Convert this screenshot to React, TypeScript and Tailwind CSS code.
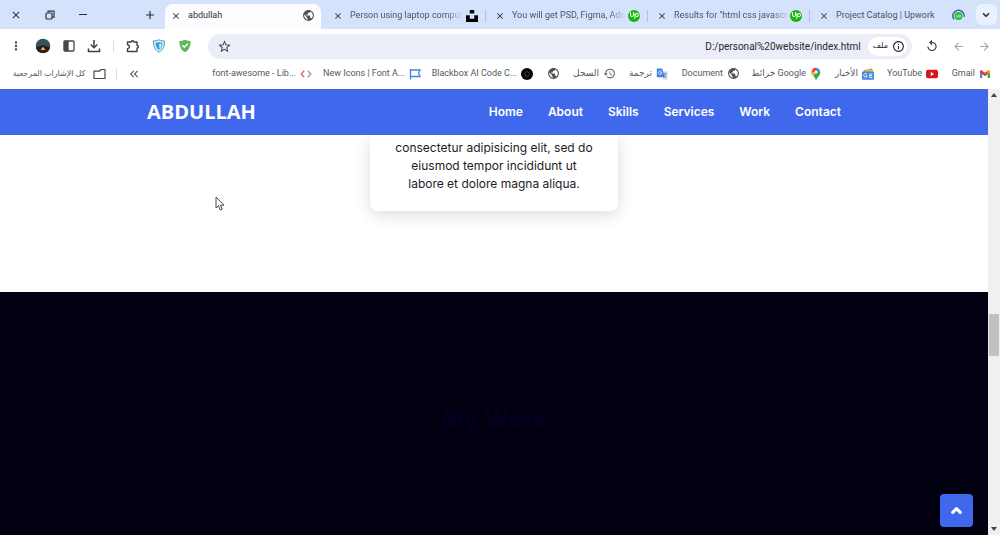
import type { ReactNode } from "react";
import {
  MdArrowBack,
  MdArrowForward,
  MdClose,
  MdHistory,
  MdInfoOutline,
  MdKeyboardDoubleArrowLeft,
  MdMoreVert,
  MdPublic,
  MdReplay,
  MdStarOutline,
} from "react-icons/md";
import { SiUnsplash, SiUpwork } from "react-icons/si";
import { ChevronDown, ChevronUp } from "lucide-react";

type Tab = { title: string; icon: ReactNode; active?: boolean; faded?: boolean };
type Bookmark = { label: string; width: string; icon: ReactNode; name?: string };

function GlobeIcon() {
  return <MdPublic className="h-[13px] w-[13px] text-[#4f5358]" />;
}

function UpworkBadge() {
  return (
    <span className="flex h-3 w-3 items-center justify-center rounded-full bg-[#14b80a] text-white">
      <SiUpwork className="h-[9px] w-[9px]" />
    </span>
  );
}

function UpworkLoading() {
  return (
    <svg viewBox="0 0 14 14" className="h-[13px] w-[13px]">
      <circle cx="7" cy="7.500" r="4.400" fill="#35c03c" />
      <path d="M4.800 6.500v1a1 1 0 0 0 2 0v-1c.5 1.500 1.300 2 1.900 1.900a1 1 0 1 0-1-1.500L7.300 9.500" fill="none" stroke="#b9ecb7" strokeWidth=".7" />
      <path d="M2.200 11.200A6.100 6.100 0 1 1 13 8.500" fill="none" stroke="#2c5fa8" strokeWidth="1.500" />
    </svg>
  );
}

function AvatarIcon() {
  return (
    <svg viewBox="0 0 16 16" className="h-4 w-4">
      <circle cx="8" cy="8" r="7.300" fill="#37505e" />
      <path d="M1 9.500 5 8l3-1 3 1 4 1.500a7.300 7.300 0 0 1-14 0Z" fill="#20201f" />
      <path d="M8 8.500 5.300 12h5.400Z" fill="#e8761e" />
      <circle cx="8" cy="11" r="1.200" fill="#ffb53a" />
    </svg>
  );
}

function SidePanelIcon() {
  return (
    <svg viewBox="0 0 12 12" className="h-3 w-3" fill="none" stroke="#474747" strokeWidth="1.300">
      <rect x="1" y="1" width="10" height="10" rx="1" />
      <path d="M1.500 1.500H5v9H1.500Z" fill="#474747" />
    </svg>
  );
}

function DownloadIcon() {
  return (
    <svg viewBox="0 0 14 14" className="h-[14px] w-[14px]" fill="none" stroke="#3f3f3f" strokeWidth="1.500">
      <path d="M7 1v7.500M3.700 5.500 7 8.800l3.300-3.300M1.500 9.500v3h11v-3" />
    </svg>
  );
}

function PuzzleIcon() {
  return (
    <svg viewBox="0 0 14 14" className="h-[14px] w-[14px]" fill="none" stroke="#3f3f3f" strokeWidth="1.400" strokeLinejoin="round">
      <path d="M1.500 3H5.200a1.300 1.300 0 0 1 2.600 0H11v3.300a1.300 1.300 0 0 1 0 2.700v3.500H1.500V9.600a1.900 1.900 0 0 0 0-3.800Z" />
    </svg>
  );
}

function BlueShieldIcon() {
  return (
    <svg viewBox="0 0 14 14" className="h-[14px] w-[14px]">
      <path d="M7 .8c2 .9 3.800 1.200 5.600 1.200 0 5-1.200 8.800-5.600 11.200C2.600 10.800 1.400 7 1.400 2 3.200 2 5 1.700 7 .8Z" fill="#dff1fb" stroke="#2f9fd0" strokeWidth="1" />
      <path d="M7 3c1.200.5 2.300.7 3.500.8-.1 3-1 5.600-3.500 7.300-2.500-1.700-3.400-4.300-3.500-7.300C4.700 3.700 5.800 3.500 7 3Z" fill="#3a9bcd" />
      <path d="M7.300 4.300v5.400C9 8.500 9.500 6.800 9.500 4.900Z" fill="#e8f5fc" />
    </svg>
  );
}

function GreenShieldIcon() {
  return (
    <svg viewBox="0 0 14 14" className="h-[14px] w-[14px]">
      <path d="M7 .8c2 .9 3.800 1.200 5.600 1.200 0 5-1.200 8.800-5.600 11.200C2.600 10.800 1.400 7 1.400 2 3.200 2 5 1.700 7 .8Z" fill="#5cb85a" />
      <path d="m4.300 6.300 2 2 3.500-3.500" fill="none" stroke="#fff" strokeWidth="1.400" />
    </svg>
  );
}

function FolderIcon() {
  return (
    <svg viewBox="0 0 13 12" className="h-3 w-[13px]" fill="none" stroke="#4a4a4a" strokeWidth="1.200">
      <path d="M1 3.200V10.500h11V1.500H8L6.600 3.200Z" strokeLinejoin="round" />
    </svg>
  );
}

function CodeIcon() {
  return (
    <svg viewBox="0 0 12 12" className="h-3 w-3" fill="none" strokeWidth="1.300">
      <path d="M4.300 2.800 1.200 6l3.100 3.200" stroke="#d9695f" />
      <path d="M7.700 2.800 10.800 6 7.700 9.200" stroke="#b98f86" />
    </svg>
  );
}

function FlagIcon() {
  return (
    <svg viewBox="0 0 12 12" className="h-3 w-3" fill="none" stroke="#4285d6" strokeWidth="1.300">
      <path d="M1.500 1v10.500M1.500 2h9.500L9.600 5.200 11 8.500H1.500" />
    </svg>
  );
}

function BlackboxIcon() {
  return (
    <svg viewBox="0 0 12 12" className="h-3 w-3">
      <circle cx="6" cy="6" r="6" fill="#050505" />
      <path d="m6 3.500 2.200 1.200v2.500L6 8.500 3.800 7.200V4.700Z" fill="none" stroke="#555" strokeWidth=".7" />
    </svg>
  );
}

function TranslateIcon() {
  return (
    <svg viewBox="0 0 12 12" className="h-3 w-3">
      <path d="M5 3.500h6.300v8H7.500Z" fill="#c8d3e4" />
      <path d="M7.500 5.800h3.300M9.200 5v.8c0 1.500-1 2.600-2 3.200M8 7c.5 1 1.300 1.600 2.400 2.200" fill="none" stroke="#6a7f9f" strokeWidth=".7" />
      <path d="M.8.5h5.400l2.500 8.800H.8Z" fill="#4080e8" />
      <path d="M5.800 4.700H4.300M5.400 3.500a1.700 1.700 0 1 0 .4 1.300" fill="none" stroke="#fff" strokeWidth=".8" />
    </svg>
  );
}

function MapsIcon() {
  return (
    <svg viewBox="0 0 12 14" className="h-[14px] w-3">
      <path d="M6 13.500c.5-2.500 4.300-4.700 4.300-8.300L8.800 2 3.300 8.700C4.700 10.500 5.700 12 6 13.500Z" fill="#34a853" />
      <path d="M6 .8a4.300 4.300 0 0 1 4 2.800L6 5.200Z" fill="#4285f4" />
      <path d="M6 .8v4.400L2.500 8A4.400 4.400 0 0 1 6 .8Z" fill="#ea4335" />
      <path d="M6 5.200 2.900 8.900C2 7.600 1.700 6.300 1.700 5.200Z" fill="#fbbc04" />
      <circle cx="6" cy="5" r="1.600" fill="#fff" />
    </svg>
  );
}

function NewsIcon() {
  return (
    <svg viewBox="0 0 12 12" className="h-3 w-3">
      <path d="M1.500 2.500 10 .5l1 4H2Z" fill="#5aa469" />
      <path d="M3 1.500h8v4H3Z" fill="#e9b44c" />
      <rect x="0" y="3.500" width="12" height="8.300" rx="1" fill="#4a88e0" />
      <path d="M5 6.200a1.800 1.800 0 1 0 .3 1.700H3.800M7 6.100h3.500M7 7.700h3M7 9.300h3.500" fill="none" stroke="#fff" strokeWidth=".9" />
    </svg>
  );
}

function YouTubeIcon() {
  return (
    <svg viewBox="0 0 12 12" className="h-3 w-3">
      <rect x="0" y="1.700" width="12" height="8.600" rx="2" fill="#d9141c" />
      <path d="M4.800 4.100v3.800L8 6Z" fill="#fff" />
    </svg>
  );
}

function GmailIcon() {
  return (
    <svg viewBox="0 0 12 12" className="h-3 w-3">
      <path d="M1 3.500h2.300V10H1Z" fill="#4285f4" />
      <path d="M8.700 3.500H11V10H8.700Z" fill="#34a853" />
      <path d="M1 4.500v-2L2.300 2 6 4.800 9.700 2l1.300.5v2L6 8.200Z" fill="#dd4335" />
      <path d="M8.700 2.800 9.700 2l1.300.5v2L8.700 6.200Z" fill="#fbbc04" />
    </svg>
  );
}

const tabs: Tab[] = [
  { title: "abdullah", icon: <GlobeIcon />, active: true },
  { title: "Person using laptop comput", icon: <SiUnsplash className="h-3 w-3 text-black" />, faded: true },
  { title: "You will get PSD, Figma, Ado", icon: <UpworkBadge />, faded: true },
  { title: 'Results for "html css javascri', icon: <UpworkBadge />, faded: true },
  { title: "Project Catalog | Upwork", icon: <UpworkLoading /> },
];

const bookmarks: Bookmark[] = [
  { label: "font-awesome - Lib...", width: "w-[82px]", icon: <CodeIcon /> },
  { label: "New Icons | Font A...", width: "w-[79px]", icon: <FlagIcon /> },
  { label: "Blackbox AI Code C...", width: "w-[82px]", icon: <BlackboxIcon /> },
  { label: "", name: "Website", width: "", icon: <GlobeIcon /> },
  { label: "السجل", width: "w-[25px]", icon: <MdHistory className="h-[13px] w-[13px] text-[#5f6368]" /> },
  { label: "ترجمة", width: "w-[22px]", icon: <TranslateIcon /> },
  { label: "Document", width: "w-[41px]", icon: <GlobeIcon /> },
  { label: "خرائط Google", width: "w-[52px]", icon: <MapsIcon /> },
  { label: "الأخبار", width: "w-[22px]", icon: <NewsIcon /> },
  { label: "YouTube", width: "w-[34px]", icon: <YouTubeIcon /> },
  { label: "Gmail", width: "w-[23px]", icon: <GmailIcon /> },
];

const navLinks = ["Home", "About", "Skills", "Services", "Work", "Contact"];

function TabStrip() {
  return (
    <div className="flex h-[29px] items-end bg-[#d5e2fc] text-[#2b3038]">
      <div className="flex h-full w-[162px] shrink-0 items-center pl-2">
        <button aria-label="Close window" className="flex w-[34px] pl-[2px]">
          <MdClose className="h-3 w-3" />
        </button>
        <button aria-label="Restore" className="flex w-[34px] pl-[3px]">
          <svg viewBox="0 0 10 10" className="h-[10px] w-[10px]" fill="none" stroke="currentColor" strokeWidth="1.200">
            <rect x="1" y="3" width="6" height="6" rx="1" />
            <path d="M3 2.500V1.200h6V7.200H7.500" />
          </svg>
        </button>
        <button aria-label="Minimize" className="flex w-[61px] pl-[3px]">
          <span className="h-px w-2 bg-[#2b3038]" />
        </button>
        <button aria-label="New tab" className="flex pl-2">
          <svg viewBox="0 0 10 10" className="h-[10px] w-[10px]" stroke="currentColor" strokeWidth="1.200">
            <path d="M5 1v8M1 5h8" />
          </svg>
        </button>
      </div>
      <div className="grid min-w-0 flex-1 grid-cols-5">
        {tabs.map((tab) => (
          <div
            key={tab.title}
            className={`flex h-[25px] min-w-0 items-center pb-[2px] ${tab.active ? "mx-[3px] rounded-t-lg bg-[#fdfdff] px-[6px]" : "pl-[9px] pr-[7px]"}`}
          >
            <button aria-label={`Close ${tab.title}`} className="shrink-0">
              <MdClose className="h-[10px] w-[10px]" />
            </button>
            <span
              className={`ml-[7px] whitespace-nowrap text-[9px] ${tab.active ? "" : "text-[#4a5568]"} ${tab.faded ? "mask-r-from-85%" : ""}`}
            >
              {tab.title}
            </span>
            <span className="ml-auto shrink-0">{tab.icon}</span>
            {tab.faded ? <span className="-mr-[7px] ml-[7px] h-3 w-px bg-[#aebfe2]" /> : null}
          </div>
        ))}
      </div>
      <div className="flex h-full w-7 shrink-0 items-center justify-center">
        <button aria-label="Search tabs" className="flex h-[21px] w-[21px] items-center justify-center rounded-md bg-[#e9f0fe]">
          <ChevronDown className="h-[10px] w-[10px]" strokeWidth={4} />
        </button>
      </div>
    </div>
  );
}

function Toolbar() {
  return (
    <div className="flex h-[34px] items-center pl-[9px] pr-[9px] text-[#3f4347]">
      <div className="flex items-center gap-3">
        <button aria-label="Menu"><MdMoreVert className="h-[14px] w-[14px]" /></button>
        <button aria-label="Profile"><AvatarIcon /></button>
        <button aria-label="Side panel"><SidePanelIcon /></button>
        <button aria-label="Downloads"><DownloadIcon /></button>
      </div>
      <span className="mx-3 h-3 w-px bg-[#d5def0]" />
      <div className="flex items-center gap-3">
        <button aria-label="Extensions"><PuzzleIcon /></button>
        <button aria-label="Site guard"><BlueShieldIcon /></button>
        <button aria-label="Safe browsing"><GreenShieldIcon /></button>
      </div>
      <div className="ml-4 flex h-[25px] min-w-0 flex-1 items-center rounded-full bg-[#ebeef8] pl-[9px] pr-[5px]">
        <button aria-label="Bookmark this page"><MdStarOutline className="h-[15px] w-[15px]" /></button>
        <input
          aria-label="Address"
          defaultValue="D:/personal%20website/index.html"
          className="min-w-0 flex-1 bg-transparent px-[7px] text-right text-[10px] text-[#25282c] outline-none"
        />
        <button className="flex h-[19px] items-center gap-1 rounded-full bg-white pl-[5px] pr-[2px] text-[8px] text-[#25282c]">
          ملف
          <MdInfoOutline className="h-[13px] w-[13px]" />
        </button>
      </div>
      <div className="ml-[13px] flex items-center gap-[13px]">
        <button aria-label="Reload"><MdReplay className="h-[14px] w-[14px]" /></button>
        <button aria-label="Back" className="text-[#a3a6aa]"><MdArrowBack className="h-[13px] w-[13px]" /></button>
        <button aria-label="Forward" className="text-[#a3a6aa]"><MdArrowForward className="h-[13px] w-[13px]" /></button>
      </div>
    </div>
  );
}

function BookmarksBar() {
  return (
    <div className="flex h-[26px] items-center justify-between pb-[5px] pl-[11px] pr-[9px] text-[9px] text-[#55595e]">
      <div className="flex items-center">
        <button className="flex items-center gap-[6px] whitespace-nowrap">
          <span className="w-[76px] text-[8px]">كل الإشارات المرجعية</span>
          <FolderIcon />
        </button>
        <span className="mx-[10px] h-3 w-px bg-[#d5def0]" />
        <button aria-label="More bookmarks">
          <MdKeyboardDoubleArrowLeft className="h-[14px] w-[14px]" />
        </button>
      </div>
      <div className="flex items-center gap-[14px]">
        {bookmarks.map((item) => (
          <a key={item.label} href="#" aria-label={item.name} className="flex items-center gap-1 whitespace-nowrap">
            {item.label ? <span className={`${item.width} flex justify-end`}>{item.label}</span> : null}
            {item.icon}
          </a>
        ))}
      </div>
    </div>
  );
}

function Scrollbar() {
  return (
    <div className="flex w-3 shrink-0 flex-col items-center justify-between bg-[#f0f0f0] py-1">
      <span className="border-x-3 border-b-4 border-x-transparent border-b-[#444]" />
      <div className="flex w-full flex-1 flex-col items-center">
        <span className="basis-[217px]" />
        <span className="h-[42px] w-[10px] bg-[#c1c1c1]" />
      </div>
      <span className="border-x-3 border-t-4 border-x-transparent border-t-[#444]" />
    </div>
  );
}

export default function App() {
  return (
    <div className="relative flex min-h-screen flex-col bg-white font-['Roboto','DejaVu_Sans',sans-serif]">
      <TabStrip />
      <Toolbar />
      <BookmarksBar />

      <div className="flex flex-1">
        <div className="relative flex min-w-0 flex-1 flex-col font-['Inter',sans-serif]">
          <header className="relative z-10 h-[46px] border-t border-[#5268cf] bg-[#4068ec] pb-[2px] text-white">
            <div className="mx-auto flex h-full max-w-[694px] items-center justify-between">
              <a href="#" className="font-['Open_Sans',sans-serif] text-[20px] font-bold">ABDULLAH</a>
              <nav className="flex gap-[25px] text-[12px] font-semibold">
                {navLinks.map((link) => (
                  <a key={link} href="#">{link}</a>
                ))}
              </nav>
            </div>
          </header>

          <section className="pb-[81px]">
            <div className="mx-auto w-[248px] rounded-b-lg px-[23px] pb-[18px] pt-1 text-center text-[12px] leading-[18px] text-[#1c1c24] shadow-[0_4px_16px_rgba(0,0,0,0.14)]">
              <p>consectetur adipisicing elit, sed do eiusmod tempor incididunt ut labore et dolore magna aliqua.</p>
            </div>
          </section>

          <section className="flex flex-1 flex-col items-center bg-[#000010] pt-[112px] text-center">
            <h2 className="text-[24px] font-bold leading-8 text-[#05001f]">My Work</h2>
          </section>

          <button
            aria-label="Back to top"
            className="absolute bottom-2 right-[15px] flex h-[33px] w-[33px] items-center justify-center rounded-sm bg-[#4068ec] text-white"
          >
            <ChevronUp className="h-[15px] w-[15px]" strokeWidth={5} />
          </button>
        </div>
        <Scrollbar />
      </div>

      <svg viewBox="0 0 10 15" className="absolute left-[215px] top-[196px] h-[15px] w-[10px]">
        <path d="M1 1v11l2.500-2.300L5.200 14l2-.9-1.700-3.900H9Z" fill="#fff" stroke="#333" strokeWidth=".9" />
      </svg>
    </div>
  );
}
